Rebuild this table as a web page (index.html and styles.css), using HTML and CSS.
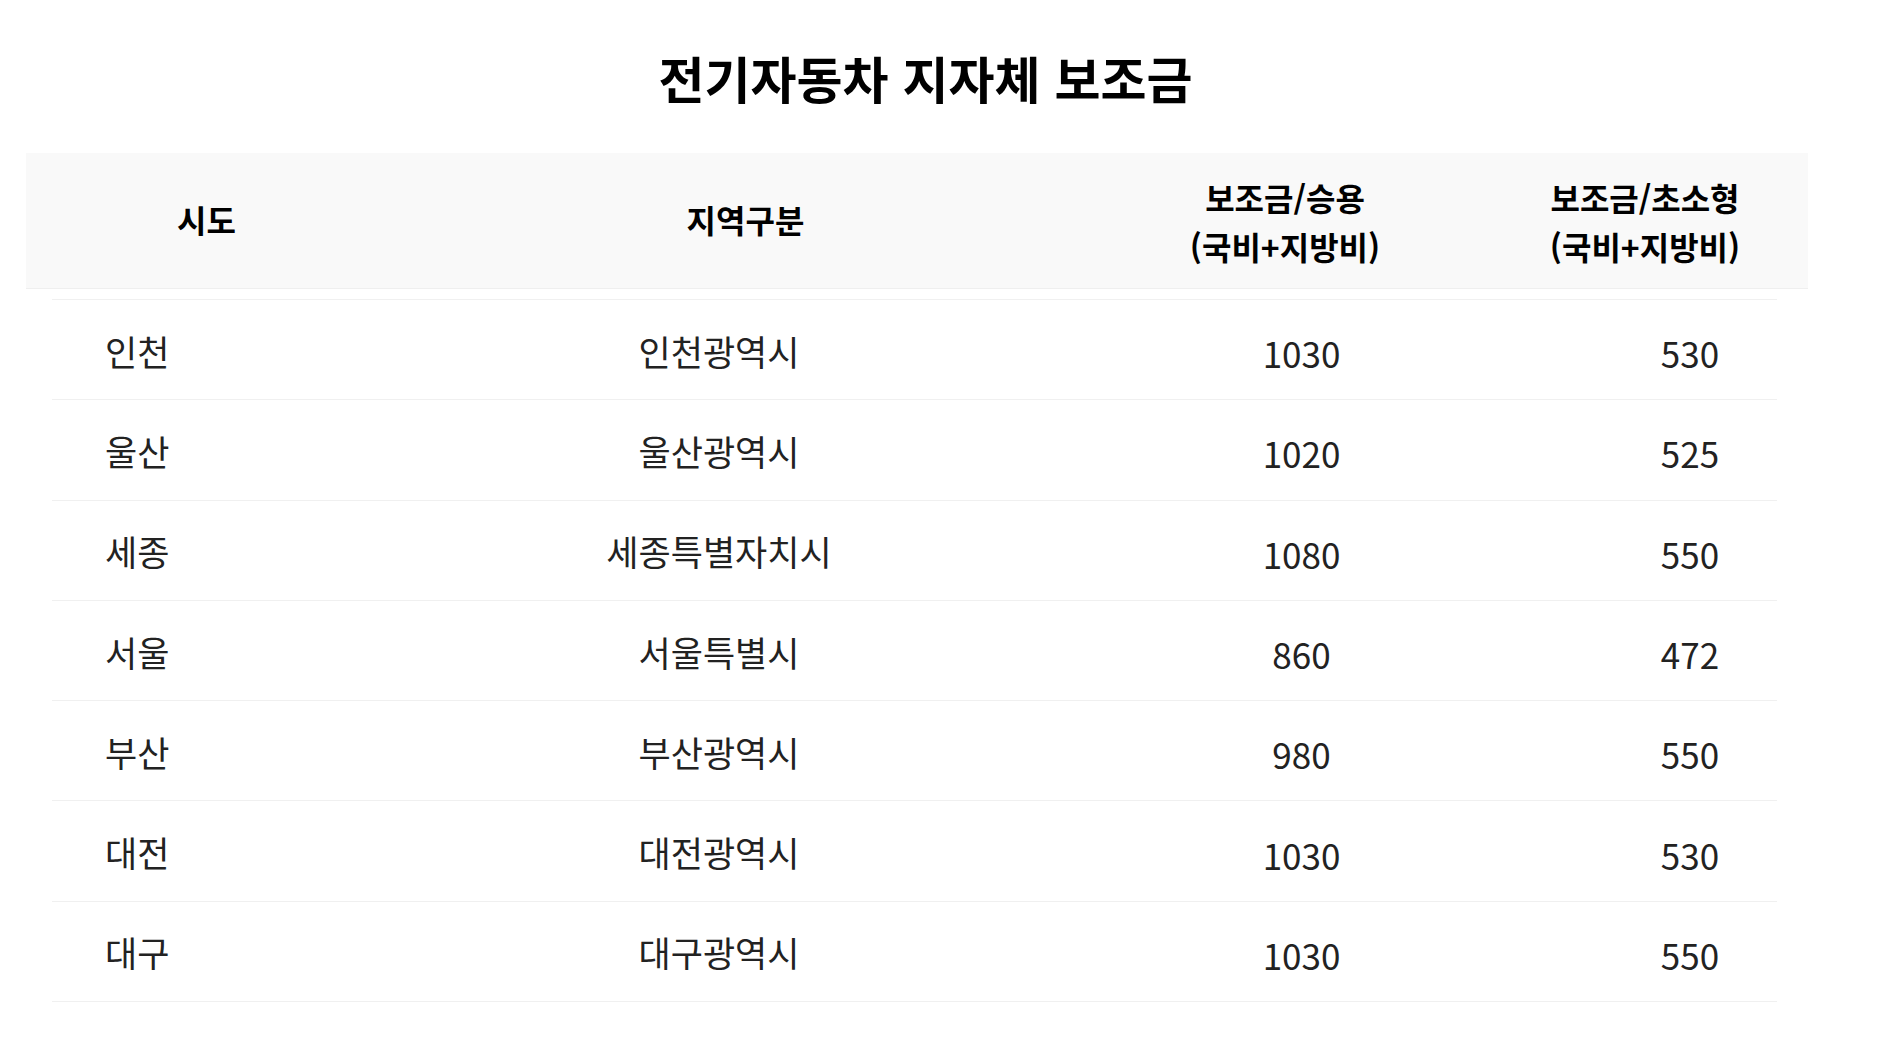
FILE: index.html
```html
<!DOCTYPE html>
<html lang="ko">
<head>
<meta charset="utf-8">
<title>전기자동차 지자체 보조금</title>
<link rel="stylesheet" href="styles.css">
</head>
<body>
<div class="page">
  <h1 class="title">전기자동차 지자체 보조금</h1>
  <div class="thead">
    <div class="th single">시도</div>
    <div class="th single">지역구분</div>
    <div class="th">보조금/승용<br>(국비+지방비)</div>
    <div class="th last">보조금/초소형<br>(국비+지방비)</div>
  </div>
  <div class="tbody">
    <div class="tr"><div class="td first">인천</div><div class="td">인천광역시</div><div class="td num">1030</div><div class="td num">530</div></div>
    <div class="tr"><div class="td first">울산</div><div class="td">울산광역시</div><div class="td num">1020</div><div class="td num">525</div></div>
    <div class="tr"><div class="td first">세종</div><div class="td">세종특별자치시</div><div class="td num">1080</div><div class="td num">550</div></div>
    <div class="tr"><div class="td first">서울</div><div class="td">서울특별시</div><div class="td num">860</div><div class="td num">472</div></div>
    <div class="tr"><div class="td first">부산</div><div class="td">부산광역시</div><div class="td num">980</div><div class="td num">550</div></div>
    <div class="tr"><div class="td first">대전</div><div class="td">대전광역시</div><div class="td num">1030</div><div class="td num">530</div></div>
    <div class="tr"><div class="td first">대구</div><div class="td">대구광역시</div><div class="td num">1030</div><div class="td num">550</div></div>
  </div>
</div>
</body>
</html>
```

FILE: styles.css
```css
html, body {
  margin: 0;
  padding: 0;
  background: #ffffff;
}

body {
  font-family: "Noto Sans CJK KR", "Noto Sans", sans-serif;
  color: #111111;
}

.page {
  margin-left: 26px;
  width: 1799px;
  padding-top: 47px;
}

.title {
  margin: 0;
  font-size: 50px;
  line-height: 60px;
  font-weight: 700;
  text-align: center;
  color: #000000;
}

.thead {
  margin-top: 46px;
  width: 1782px;
  height: 136px;
  box-sizing: border-box;
  padding-top: 3px;
  background: #f9f9f9;
  border-bottom: 1px solid #efefef;
  display: grid;
  grid-template-columns: 361px 717px 362px 342px;
  align-items: center;
}

.th {
  text-align: center;
  font-size: 32px;
  line-height: 49px;
  font-weight: 700;
  color: #000000;
}

.th.single {
  padding-bottom: 5px;
}

.th.last {
  padding-left: 16px;
}

.tbody {
  margin-top: 10px;
  margin-left: 26px;
  width: 1725px;
  border-top: 1px solid #f0f0f0;
}

.tr {
  display: grid;
  grid-template-columns: 386px 562px 603px 174px;
  align-items: center;
  height: 100.3px;
  box-sizing: border-box;
  border-bottom: 1px solid #f0f0f0;
}

.td {
  text-align: center;
  font-size: 35px;
  line-height: 42px;
  font-weight: 400;
  color: #222222;
  padding-top: 2px;
}

.td.num {
  padding-top: 7px;
}

.td.first {
  text-align: left;
  padding-left: 53px;
}
```
